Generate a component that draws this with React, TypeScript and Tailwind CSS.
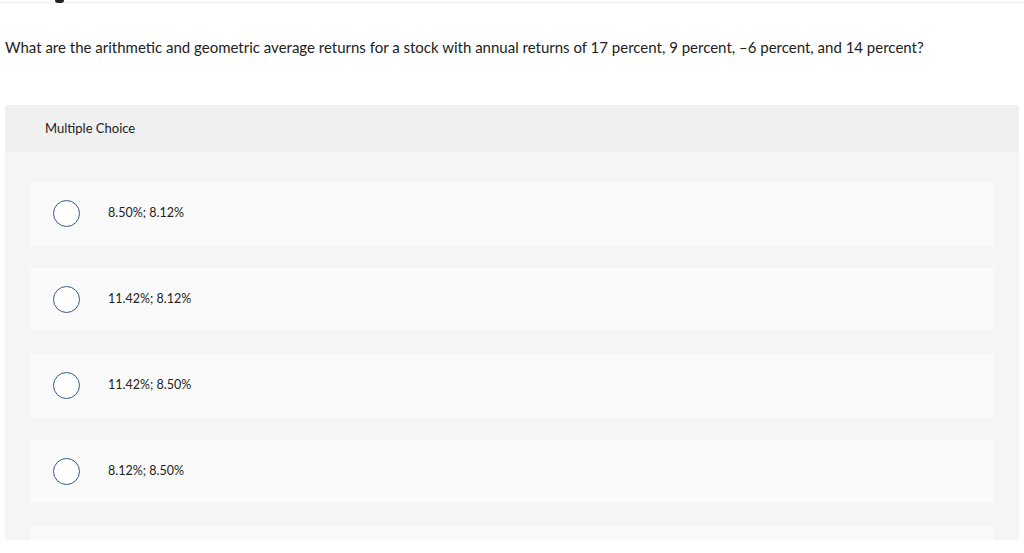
import React from 'react';

const choices = ['8.50%; 8.12%', '11.42%; 8.12%', '11.42%; 8.50%', '8.12%; 8.50%', ''];

function Choice({ label }: { label: string }) {
  return (
    <div className="flex items-center h-[63px] bg-[#fafafa] rounded-[3px] pl-[23px]">
      <span className="w-[27px] h-[27px] rounded-full border border-[#2d5b8e] bg-white shrink-0" />
      <span className="ml-[28px] text-[12.5px] text-[#222]">{label}</span>
    </div>
  );
}

export default function App() {
  return (
    <div className="h-[553px] bg-white overflow-hidden" style={{ fontFamily: 'Lato, "Open Sans", sans-serif' }}>
      <div className="h-[540px] overflow-hidden">
        <div className="relative h-[3px] border-b border-[#eeeeee]">
          <span className="absolute left-[55px] top-0 w-[9px] h-[3px] bg-[#222] rounded-b-[3px]" />
        </div>
        <p className="mt-[34px] px-[5px] text-[15px] text-[#222] leading-[20px]">
          What are the arithmetic and geometric average returns for a stock with annual returns of 17 percent, 9 percent, –6 percent, and 14 percent?
        </p>
        <div className="mt-[48px] mx-[5px] bg-[#f5f5f5]">
          <div className="h-[47px] bg-[#f0f0f0] flex items-center pl-[40px] text-[13px] text-[#222]">
            Multiple Choice
          </div>
          <div className="flex flex-col gap-[23px] pt-[30px] pl-[25px] pr-[25px]">
            {choices.map((c, i) => (
              <Choice key={i} label={c} />
            ))}
          </div>
        </div>
      </div>
    </div>
  );
}
